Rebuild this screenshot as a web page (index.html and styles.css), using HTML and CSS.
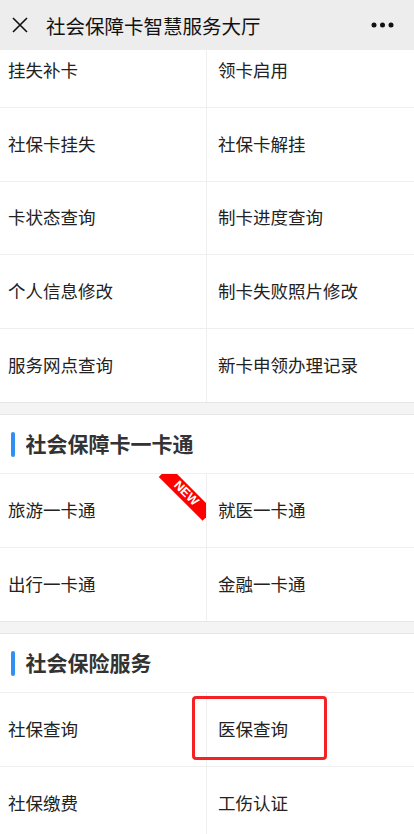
FILE: index.html
```html
<!DOCTYPE html>
<html lang="zh-CN">
<head>
    <meta charset="UTF-8">
    <meta name="viewport" content="width=device-width, initial-scale=1.0">
    <title>社会保障卡智慧服务大厅</title>
    <link rel="stylesheet" href="styles.css">
</head>
<body>
    <div class="topbar">
        <svg class="close-icon" width="16" height="16" viewBox="0 0 16 16">
            <path d="M1 1 L15 15 M15 1 L1 15" stroke="#111" stroke-width="1.6" fill="none"/>
        </svg>
        <span class="topbar-title">社会保障卡智慧服务大厅</span>
        <svg class="more-icon" width="26" height="6" viewBox="0 0 26 6">
            <circle cx="3" cy="3" r="2.5" fill="#111"/>
            <circle cx="11.5" cy="3" r="2.5" fill="#111"/>
            <circle cx="20" cy="3" r="2.5" fill="#111"/>
        </svg>
    </div>

    <div class="page">
        <div class="section">
            <div class="grid">
                <div class="cell">挂失补卡</div>
                <div class="cell">领卡启用</div>
                <div class="cell">社保卡挂失</div>
                <div class="cell">社保卡解挂</div>
                <div class="cell">卡状态查询</div>
                <div class="cell">制卡进度查询</div>
                <div class="cell">个人信息修改</div>
                <div class="cell">制卡失败照片修改</div>
                <div class="cell">服务网点查询</div>
                <div class="cell">新卡申领办理记录</div>
            </div>
        </div>

        <div class="section">
            <div class="section-title"><span class="bar"></span>社会保障卡一卡通</div>
            <div class="grid">
                <div class="cell">旅游一卡通<span class="ribbon">NEW</span></div>
                <div class="cell">就医一卡通</div>
                <div class="cell">出行一卡通</div>
                <div class="cell">金融一卡通</div>
            </div>
        </div>

        <div class="section">
            <div class="section-title"><span class="bar"></span>社会保险服务</div>
            <div class="grid">
                <div class="cell">社保查询</div>
                <div class="cell">医保查询<span class="highlight"></span></div>
                <div class="cell">社保缴费</div>
                <div class="cell">工伤认证</div>
            </div>
        </div>
    </div>
</body>
</html>
```

FILE: styles.css
```css
body {
    margin: 0;
    padding: 0;
    background-color: #f4f4f4;
    font-family: 'Noto Sans CJK SC', 'Noto Sans', sans-serif;
    color: #222222;
}
.topbar {
    position: fixed;
    top: 0;
    left: 0;
    right: 0;
    height: 50px;
    z-index: 10;
    background-color: #ededed;
    display: flex;
    align-items: center;
    padding: 0 17px 0 12px;
}
.close-icon {
    flex: none;
    margin-right: 18px;
}
.topbar-title {
    flex: 1;
    font-size: 19.5px;
    color: #111111;
}
.more-icon {
    flex: none;
}
.page {
    padding-top: 34.5px;
}
.section {
    background-color: #ffffff;
    border-bottom: 1px solid #e6e6e6;
    border-top: 1px solid #e6e6e6;
    margin-bottom: 11px;
}
.section:first-child {
    border-top: none;
}
.section-title {
    display: flex;
    align-items: center;
    box-sizing: border-box;
    height: 59px;
    padding: 0 0 3px 11px;
    font-size: 21px;
    font-weight: bold;
    color: #333333;
    border-bottom: 1px solid #efefef;
}
.bar {
    width: 3.5px;
    height: 25px;
    border-radius: 2px;
    background-color: #2f8ff3;
    margin: 3px 11px 0 0;
}
.grid {
    display: grid;
    grid-template-columns: 207px 1fr;
}
.cell {
    position: relative;
    box-sizing: border-box;
    height: 73.5px;
    display: flex;
    align-items: center;
    padding: 0 0 2px 11px;
    font-size: 17.5px;
    border-bottom: 1px solid #efefef;
}
.cell:nth-child(odd) {
    padding-left: 8px;
    border-right: 1px solid #efefef;
    overflow: hidden;
}
.grid .cell:nth-last-child(-n+2) {
    border-bottom: none;
}
.ribbon {
    position: absolute;
    top: 12px;
    right: -11px;
    width: 62px;
    height: 15px;
    line-height: 15px;
    background-color: #ff0000;
    color: #ffffff;
    font-family: 'Liberation Sans', Arial, sans-serif;
    font-size: 12.5px;
    font-weight: bold;
    text-align: center;
    transform: rotate(45deg);
}
.highlight {
    position: absolute;
    left: -15.5px;
    top: 3px;
    width: 135px;
    height: 64px;
    box-sizing: border-box;
    border: 3px solid #f42222;
    border-radius: 4px;
}
```
